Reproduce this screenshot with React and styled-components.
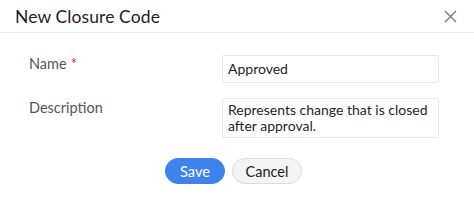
import styled, { createGlobalStyle } from 'styled-components';

const Global = createGlobalStyle`
  body {
    margin: 0;
    background: #fff;
    font-family: 'Lato', 'Noto Sans', sans-serif;
  }
`;

const Dialog = styled.div`
  width: 474px;
  height: 200px;
  background: #fff;
  display: flex;
  flex-direction: column;
`;

const Header = styled.div`
  height: 33px;
  border-bottom: 1px solid #ececec;
  display: flex;
  align-items: center;
  justify-content: space-between;
  padding: 0 17px 0 15px;
  box-sizing: border-box;
`;

const Title = styled.h2`
  margin: 0;
  font-size: 17.5px;
  font-weight: 400;
  letter-spacing: 0.1px;
  color: #1f1f1f;
`;

const Close = styled.button`
  border: 0;
  background: none;
  padding: 0;
  display: flex;
  cursor: pointer;
`;

const Body = styled.div`
  display: flex;
  flex-direction: column;
  gap: 15px;
  padding: 22px 35px 0 29px;
`;

const Row = styled.div`
  display: grid;
  grid-template-columns: 193px 1fr;
  align-items: start;
`;

const Label = styled.label`
  font-size: 14.5px;
  color: #555;
  padding-top: ${(p) => p.$top}px;
`;

const Star = styled.span`
  color: #e3242b;
  margin-left: 4px;
`;

const Field = styled.div`
  border: 1px solid #e8e8e8;
  border-radius: 2px;
  font-size: 14px;
  color: #1f1f1f;
  line-height: 16px;
  padding: ${(p) => p.$pad};
  min-height: ${(p) => p.$h}px;
  box-sizing: border-box;
`;

const Actions = styled.div`
  display: flex;
  justify-content: center;
  gap: 7px;
  padding: 20px 7px 0 0;
`;

const Button = styled.button`
  height: 26px;
  border-radius: 13px;
  font-family: inherit;
  font-size: 14.5px;
  padding: 0;
  width: ${(p) => p.$w}px;
  border: 1px solid ${(p) => (p.$primary ? '#3e82ef' : '#dcdcdc')};
  background: ${(p) => (p.$primary ? '#3e82ef' : '#f4f4f4')};
  color: ${(p) => (p.$primary ? '#fff' : '#222')};
`;

export default function App() {
  return (
    <>
      <Global />
      <Dialog>
        <Header>
          <Title>New Closure Code</Title>
          <Close aria-label="close">
            <svg width="13" height="13" viewBox="0 0 13 13">
              <path d="M1 1L12 12M12 1L1 12" stroke="#777" strokeWidth="1.3" />
            </svg>
          </Close>
        </Header>
        <Body>
          <Row>
            <Label $top={0}>
              Name<Star>*</Star>
            </Label>
            <Field $pad="5px 4px 5px 5px" $h={28}>Approved</Field>
          </Row>
          <Row>
            <Label $top={1}>Description</Label>
            <Field $pad="3px 4px 3px 5px" $h={37}>
              Represents change that is closed after approval.
            </Field>
          </Row>
        </Body>
        <Actions>
          <Button $primary $w={60}>Save</Button>
          <Button $w={70}>Cancel</Button>
        </Actions>
      </Dialog>
    </>
  );
}
